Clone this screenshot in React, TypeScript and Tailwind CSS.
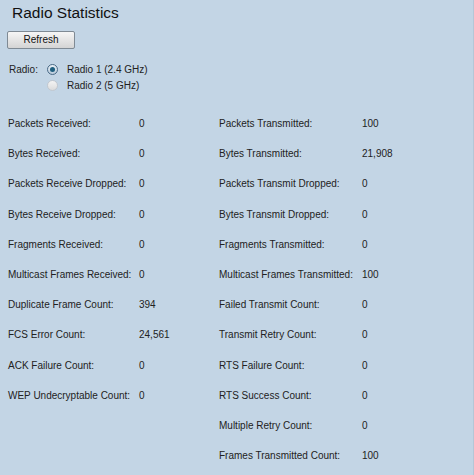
const left: [string, string][] = [
  ["Packets Received:", "0"],
  ["Bytes Received:", "0"],
  ["Packets Receive Dropped:", "0"],
  ["Bytes Receive Dropped:", "0"],
  ["Fragments Received:", "0"],
  ["Multicast Frames Received:", "0"],
  ["Duplicate Frame Count:", "394"],
  ["FCS Error Count:", "24,561"],
  ["ACK Failure Count:", "0"],
  ["WEP Undecryptable Count:", "0"],
];

const right: [string, string][] = [
  ["Packets Transmitted:", "100"],
  ["Bytes Transmitted:", "21,908"],
  ["Packets Transmit Dropped:", "0"],
  ["Bytes Transmit Dropped:", "0"],
  ["Fragments Transmitted:", "0"],
  ["Multicast Frames Transmitted:", "100"],
  ["Failed Transmit Count:", "0"],
  ["Transmit Retry Count:", "0"],
  ["RTS Failure Count:", "0"],
  ["RTS Success Count:", "0"],
  ["Multiple Retry Count:", "0"],
  ["Frames Transmitted Count:", "100"],
];

function Radio({ checked }: { checked?: boolean }) {
  return (
    <span
      className={
        "w-[11px] h-[11px] rounded-full border flex items-center justify-center " +
        (checked
          ? "border-[#4a6a86] bg-gradient-to-b from-[#e8f0f6] to-[#b9cadb]"
          : "border-[#c2c8cf] bg-gradient-to-b from-[#f4f4f4] to-[#dcdcdc]")
      }
    >
      {checked && <span className="w-[5px] h-[5px] rounded-full bg-[#1f5f7f]" />}
    </span>
  );
}

function StatColumn({ rows, labelW }: { rows: [string, string][]; labelW: string }) {
  return (
    <div className="flex flex-col">
      {rows.map(([k, v]) => (
        <div key={k} className="flex items-center h-[30.2px] whitespace-nowrap">
          <span className={labelW}>{k}</span>
          <span>{v}</span>
        </div>
      ))}
    </div>
  );
}

export default function App() {
  return (
    <main
      className="w-[474px] h-[475px] bg-[#c3d5e5] text-[#222] text-[10px] overflow-hidden border-r border-[#b5c7d7]"
      style={{ fontFamily: '"Liberation Sans", Arial, sans-serif' }}
    >
      <h1 className="text-[15.5px] leading-none pt-[5px] pl-[12px] text-[#111]">Radio Statistics</h1>

      <button className="ml-[7px] mt-[10px] w-[68px] h-[18px] rounded-[2px] border border-[#7f8a94] bg-gradient-to-b from-[#f6f6f6] to-[#d4d4d4] text-[10px] text-[#111] leading-none">
        Refresh
      </button>

      <div className="flex mt-[13px] pl-[9px]">
        <span className="w-[38px] leading-[16px]">Radio:</span>
        <div className="flex flex-col">
          <label className="flex items-center gap-[9px] h-[16px]">
            <Radio checked />
            <span>Radio 1 (2.4 GHz)</span>
          </label>
          <label className="flex items-center gap-[9px] h-[16px]">
            <Radio />
            <span>Radio 2 (5 GHz)</span>
          </label>
        </div>
      </div>

      <div className="flex mt-[15px]">
        <div className="w-[219px] pl-[8px]">
          <StatColumn rows={left} labelW="w-[131px]" />
        </div>
        <StatColumn rows={right} labelW="w-[143px]" />
      </div>
    </main>
  );
}
